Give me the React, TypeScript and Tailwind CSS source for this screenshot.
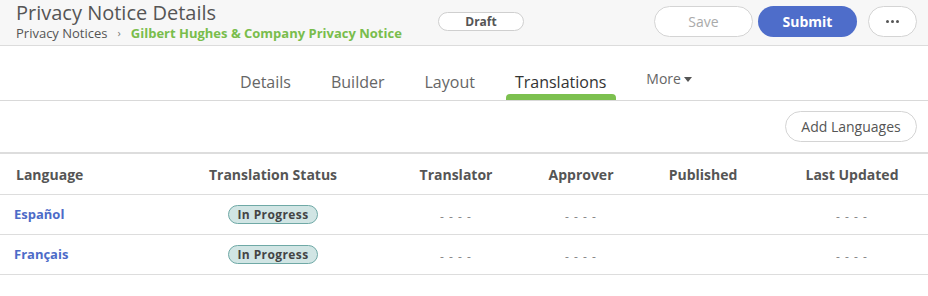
import React from "react";

const rows = [
  { lang: "Español" },
  { lang: "Français" },
];

function Dashes() {
  return <span className="text-[12px] text-[#888] tracking-[1px]">- - - -</span>;
}

export default function App() {
  const font = { fontFamily: '"Open Sans", "Liberation Sans", sans-serif' };
  return (
    <div className="w-[928px] h-[296px] bg-white overflow-hidden" style={font}>
      {/* Header */}
      <div className="h-[46px] bg-[#f7f7f7] border-b border-[#dcdcdc] flex items-start">
        <div className="pl-4 pt-[2px] w-[420px] shrink-0">
          <div className="text-[20px] leading-[22px] text-[#555] whitespace-nowrap">Privacy Notice Details</div>
          <div className="text-[13px] leading-[18px] flex items-center whitespace-nowrap">
            <span className="text-[#555]">Privacy Notices</span>
            <span className="text-[#777] text-[11px] mx-[10px]">›</span>
            <span className="text-[#79bd4c] font-bold">Gilbert Hughes &amp; Company Privacy Notice</span>
          </div>
        </div>
        <div className="ml-[18px] mt-[12px] w-[86px] h-[19px] rounded-full border border-[#cfcfcf] bg-white flex items-center justify-center text-[12px] font-bold text-[#555]">
          Draft
        </div>
        <div className="ml-auto mr-[11px] mt-[6px] flex items-center">
          <button className="w-[99px] h-[31px] rounded-full border border-[#d4d4d4] bg-white text-[14px] text-[#aaa]">
            Save
          </button>
          <button className="ml-[5px] w-[99px] h-[31px] rounded-full bg-[#4e6dca] text-[14px] font-bold text-white">
            Submit
          </button>
          <button className="ml-[11px] w-[49px] h-[31px] rounded-full border border-[#d4d4d4] bg-white flex items-center justify-center gap-[2px]">
            <span className="w-[3px] h-[3px] rounded-full bg-[#555]" />
            <span className="w-[3px] h-[3px] rounded-full bg-[#555]" />
            <span className="w-[3px] h-[3px] rounded-full bg-[#555]" />
          </button>
        </div>
      </div>

      {/* Tabs */}
      <div className="h-[55px] border-b border-[#d9d9d9] flex items-end justify-center pl-[4px]">
        <div className="flex items-end gap-[20px]">
          {["Details", "Builder", "Layout"].map((t) => (
            <div key={t} className="px-[10px] h-[40px] flex items-start pt-[11px] text-[16px] leading-[22px] text-[#666]">
              {t}
            </div>
          ))}
          <div className="px-[10px] h-[40px] flex flex-col items-center">
            <div className="pt-[11px] text-[16px] leading-[22px] text-[#333]">Translations</div>
            <div className="mt-auto w-[110px] h-[6px] rounded-t-[4px] bg-[#7cc04f] -mx-[10px]" />
          </div>
          <div className="px-[10px] h-[40px] flex items-start pt-[10px] text-[14px] leading-[18px] text-[#666]">
            More
            <svg width="8" height="5" viewBox="0 0 8 5" className="ml-[3px] mt-[7px]">
              <path d="M0 0 L8 0 L4 5 Z" fill="#555" />
            </svg>
          </div>
        </div>
      </div>

      {/* Toolbar */}
      <div className="h-[53px] border-b-2 border-[#dddddd] flex items-start justify-end pr-[11px] pt-[10px]">
        <button className="w-[132px] h-[31px] rounded-full border border-[#d4d4d4] bg-white text-[14px] text-[#555]">
          Add Languages
        </button>
      </div>

      {/* Table */}
      <div className="grid grid-cols-[180px_186px_180px_70px_174px_124px] h-[41px] items-center border-b border-[#dddddd] text-[14px] font-bold text-[#555]">
        <div className="pl-4">Language</div>
        <div className="text-center">Translation Status</div>
        <div className="text-center">Translator</div>
        <div className="text-center">Approver</div>
        <div className="text-center">Published</div>
        <div className="text-center">Last Updated</div>
      </div>
      {rows.map((r) => (
        <div
          key={r.lang}
          className="grid grid-cols-[180px_186px_180px_70px_174px_124px] h-[40px] items-center border-b border-[#dddddd]"
        >
          <div className="pl-[14px] text-[13px] font-bold text-[#4d6bc8]">{r.lang}</div>
          <div className="flex justify-center">
            <span className="w-[90px] h-[19px] rounded-full border border-[#6fa9a6] bg-[#d1e5e4] flex items-center justify-center text-[12px] font-bold text-[#444] tracking-[0.4px]">
              In Progress
            </span>
          </div>
          <div className="text-center"><Dashes /></div>
          <div className="text-center"><Dashes /></div>
          <div />
          <div className="text-center"><Dashes /></div>
        </div>
      ))}
    </div>
  );
}
